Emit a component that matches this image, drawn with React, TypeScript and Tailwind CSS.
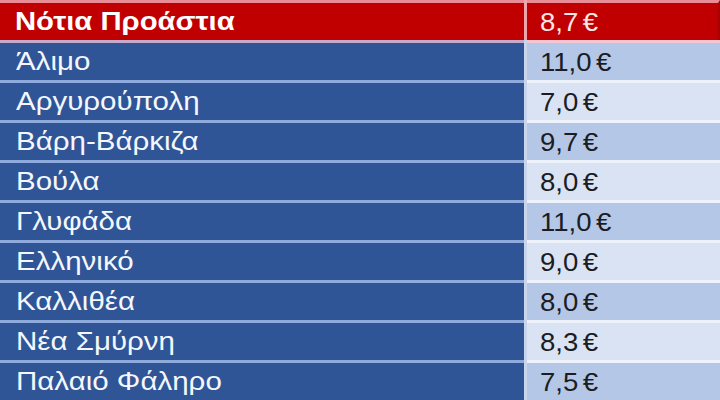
import React from "react";

const rows: [string, string][] = [
  ["Άλιμο", "11,0 €"],
  ["Αργυρούπολη", "7,0 €"],
  ["Βάρη-Βάρκιζα", "9,7 €"],
  ["Βούλα", "8,0 €"],
  ["Γλυφάδα", "11,0 €"],
  ["Ελληνικό", "9,0 €"],
  ["Καλλιθέα", "8,0 €"],
  ["Νέα Σμύρνη", "8,3 €"],
  ["Παλαιό Φάληρο", "7,5 €"],
];

export default function App() {
  return (
    <div
      className="w-[720px] h-[400px] overflow-hidden bg-white flex flex-col"
      style={{ fontFamily: '"Liberation Sans", Arial, sans-serif' }}
    >
      {/* header */}
      <div className="flex h-[40px] shrink-0">
        <div className="w-[524px] border-t-[3px] border-[#e98c95] bg-[#c00000] flex items-center pl-[15px]">
          <span className="inline-block origin-left scale-x-[1.17] text-[25px] font-bold text-white leading-none">
            Νότια Προάστια
          </span>
        </div>
        <div className="w-[3px] bg-[#f0a5ad]" />
        <div className="flex-1 border-t-[3px] border-[#e98c95] bg-[#c00000] border-r-2 border-r-[#a80000] flex items-center pl-[13px]">
          <span className="inline-block origin-left scale-x-[1.06] text-[26px] text-[#fde6e6] leading-none [word-spacing:-3px]">
            8,7 €
          </span>
        </div>
      </div>
      {rows.map(([name, price], i) => (
        <div key={name} className="flex h-[40px] shrink-0">
          <div
            className={`w-[524px] border-t-[3px] bg-[#2f5597] flex items-center pl-[16px] ${
              i === 0 ? "border-[#c7a9c9]" : "border-[#8faadc]"
            }`}
          >
            <span className="inline-block origin-left scale-x-[1.18] text-[25px] text-[#f4f7fc] leading-none">
              {name}
            </span>
          </div>
          <div className="w-[3px] bg-[#c9d5ec]" />
          <div
            className={`flex-1 border-t-[3px] flex items-center pl-[13px] ${
              i === 0 ? "border-[#f6c5d3]" : "border-[#eef2fa]"
            } ${i % 2 === 0 ? "bg-[#b4c7e7]" : "bg-[#dae3f3]"}`}
          >
            <span className="inline-block origin-left scale-x-[1.06] text-[26px] text-[#1c1c24] leading-none [word-spacing:-3px]">
              {price}
            </span>
          </div>
        </div>
      ))}
    </div>
  );
}
